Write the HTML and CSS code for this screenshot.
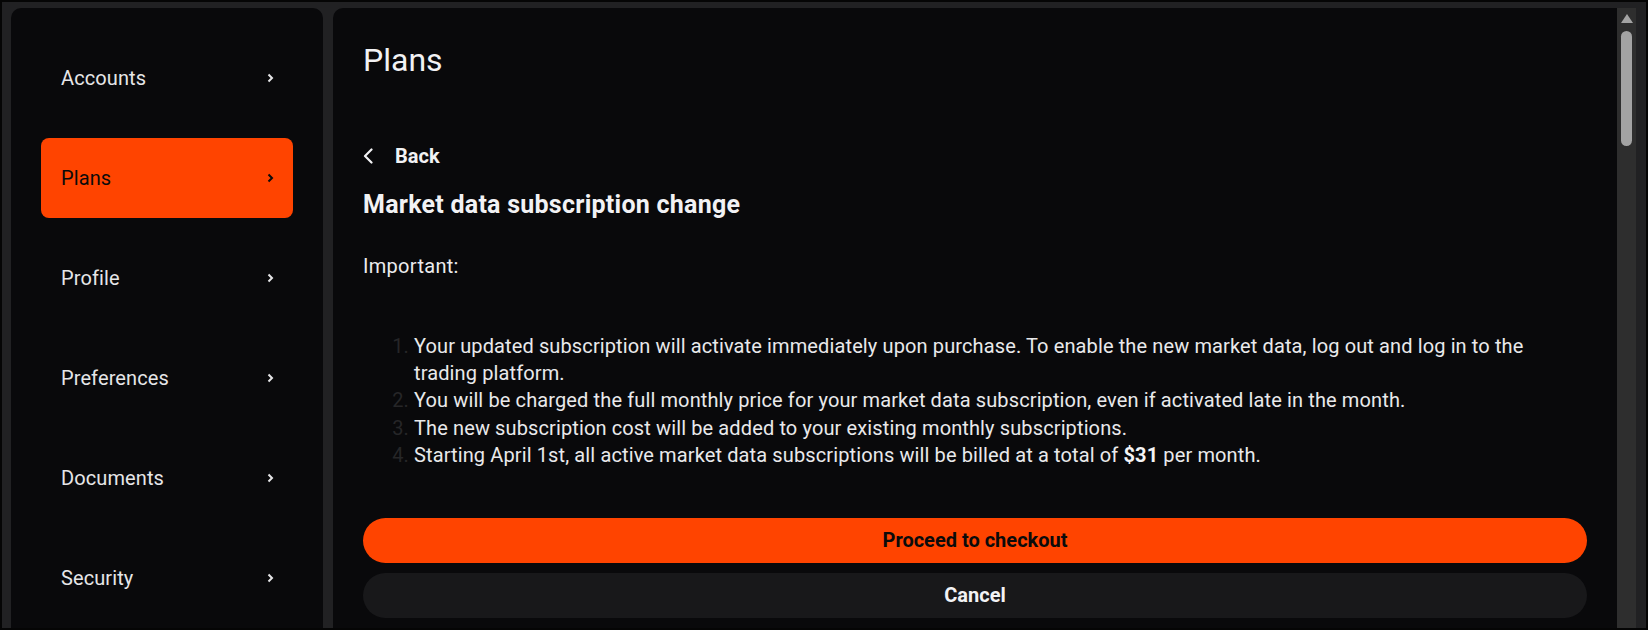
FILE: index.html
```html
<!DOCTYPE html>
<html lang="en">
<head>
    <meta charset="UTF-8">
    <meta name="viewport" content="width=device-width, initial-scale=1.0">
    <title>Plans</title>
    <link rel="stylesheet" href="styles.css">
</head>
<body>
    <div class="app">
        <aside class="sidebar">
            <a class="nav-item" href="#">Accounts <svg class="chev" width="7" height="10" viewBox="0 0 7 10"><path d="M1.5 1.5 5 5l-3.5 3.5"/></svg></a>
            <a class="nav-item active" href="#">Plans <svg class="chev" width="7" height="10" viewBox="0 0 7 10"><path d="M1.5 1.5 5 5l-3.5 3.5"/></svg></a>
            <a class="nav-item" href="#">Profile <svg class="chev" width="7" height="10" viewBox="0 0 7 10"><path d="M1.5 1.5 5 5l-3.5 3.5"/></svg></a>
            <a class="nav-item" href="#">Preferences <svg class="chev" width="7" height="10" viewBox="0 0 7 10"><path d="M1.5 1.5 5 5l-3.5 3.5"/></svg></a>
            <a class="nav-item" href="#">Documents <svg class="chev" width="7" height="10" viewBox="0 0 7 10"><path d="M1.5 1.5 5 5l-3.5 3.5"/></svg></a>
            <a class="nav-item" href="#">Security <svg class="chev" width="7" height="10" viewBox="0 0 7 10"><path d="M1.5 1.5 5 5l-3.5 3.5"/></svg></a>
        </aside>

        <div class="panel">
            <main class="main">
                <h1 class="page-title">Plans</h1>

                <a class="back" href="#">
                    <svg width="10" height="16" viewBox="0 0 10 16"><path d="M8.5 1.5 2 8l6.5 6.5"/></svg>
                    Back
                </a>

                <h2 class="section-title">Market data subscription change</h2>

                <p class="important">Important:</p>

                <ol class="notes">
                    <li>Your updated subscription will activate immediately upon purchase. To enable the new market data, log out and log in to the trading platform.</li>
                    <li>You will be charged the full monthly price for your market data subscription, even if activated late in the month.</li>
                    <li>The new subscription cost will be added to your existing monthly subscriptions.</li>
                    <li>Starting April 1st, all active market data subscriptions will be billed at a total of <b>$31</b> per month.</li>
                </ol>

                <div class="actions">
                    <button class="btn btn-primary">Proceed to checkout</button>
                    <button class="btn btn-secondary">Cancel</button>
                </div>
            </main>
            <div class="scrollbar">
                <span class="scroll-arrow"></span>
                <span class="scroll-thumb"></span>
            </div>
        </div>
    </div>
</body>
</html>
```

FILE: styles.css
```css
html, body {
    margin: 0;
    height: 630px;
    overflow: hidden;
    background: #000;
}
body {
    font-family: Roboto, "Liberation Sans", sans-serif;
    color: #ececee;
}
.app {
    box-sizing: border-box;
    height: 630px;
    border: 2px solid #050505;
    padding: 6px 10px 0 9px;
    background: #212123;
    display: flex;
    gap: 10px;
    overflow: hidden;
}

/* left menu */
.sidebar {
    width: 312px;
    flex: none;
    box-sizing: border-box;
    padding: 30px;
    background: #09090b;
    border-radius: 10px 10px 0 0;
    display: flex;
    flex-direction: column;
    gap: 20px;
}
.nav-item {
    height: 80px;
    flex: none;
    display: flex;
    align-items: center;
    justify-content: space-between;
    padding: 0 19px 0 20px;
    border-radius: 8px;
    font-size: 20px;
    letter-spacing: 0.1px;
    color: #e6e6e8;
    text-decoration: none;
}
.nav-item.active {
    background: #ff4400;
    color: #0b0b0b;
}
.chev path {
    fill: none;
    stroke: currentColor;
    stroke-width: 2;
}

/* content */
.panel {
    flex: 1;
    display: flex;
    border-radius: 10px 0 0 0;
    overflow: hidden;
}
.main {
    flex: 1;
    background: #09090b;
    padding: 33px 30px 0;
}
.page-title {
    margin: 0;
    font-size: 32px;
    line-height: 38px;
    font-weight: 400;
    color: #f2f2f4;
}
.back {
    margin-top: 65px;
    display: flex;
    align-items: center;
    gap: 22px;
    height: 24px;
    font-size: 20px;
    font-weight: 700;
    color: #f2f2f4;
    text-decoration: none;
}
.back svg path {
    fill: none;
    stroke: currentColor;
    stroke-width: 2.2;
    stroke-linecap: round;
    stroke-linejoin: round;
}
.section-title {
    margin: 22px 0 0;
    font-size: 25px;
    line-height: 30px;
    letter-spacing: 0.25px;
    font-weight: 700;
    color: #f2f2f4;
}
.important {
    margin: 33px 0 0;
    font-size: 20px;
    line-height: 27.5px;
    letter-spacing: 0.3px;
}
.notes {
    margin: 52px 0 0;
    padding-left: 51px;
    font-size: 20px;
    line-height: 27.4px;
    letter-spacing: 0.12px;
    color: #e9e9eb;
}
.notes li::marker {
    color: #262628;
}
.notes b {
    font-weight: 700;
    color: #f4f4f6;
}
.actions {
    margin-top: 48px;
    display: flex;
    flex-direction: column;
    gap: 10px;
}
.btn {
    height: 45px;
    border: none;
    border-radius: 23px;
    font-family: inherit;
    font-size: 20px;
    font-weight: 700;
    cursor: pointer;
}
.btn-primary {
    background: #ff4400;
    color: #0b0b0b;
}
.btn-secondary {
    background: #18181a;
    color: #f2f2f4;
}

/* drawn scrollbar */
.scrollbar {
    width: 19px;
    flex: none;
    background: #2e2e2e;
    display: flex;
    flex-direction: column;
    align-items: center;
    padding-top: 6px;
}
.scroll-arrow {
    width: 0;
    height: 0;
    border-left: 6px solid transparent;
    border-right: 6px solid transparent;
    border-bottom: 9px solid #a3a3a3;
}
.scroll-thumb {
    margin-top: 8px;
    width: 11px;
    height: 115px;
    border-radius: 6px;
    background: #a3a3a3;
}
```
